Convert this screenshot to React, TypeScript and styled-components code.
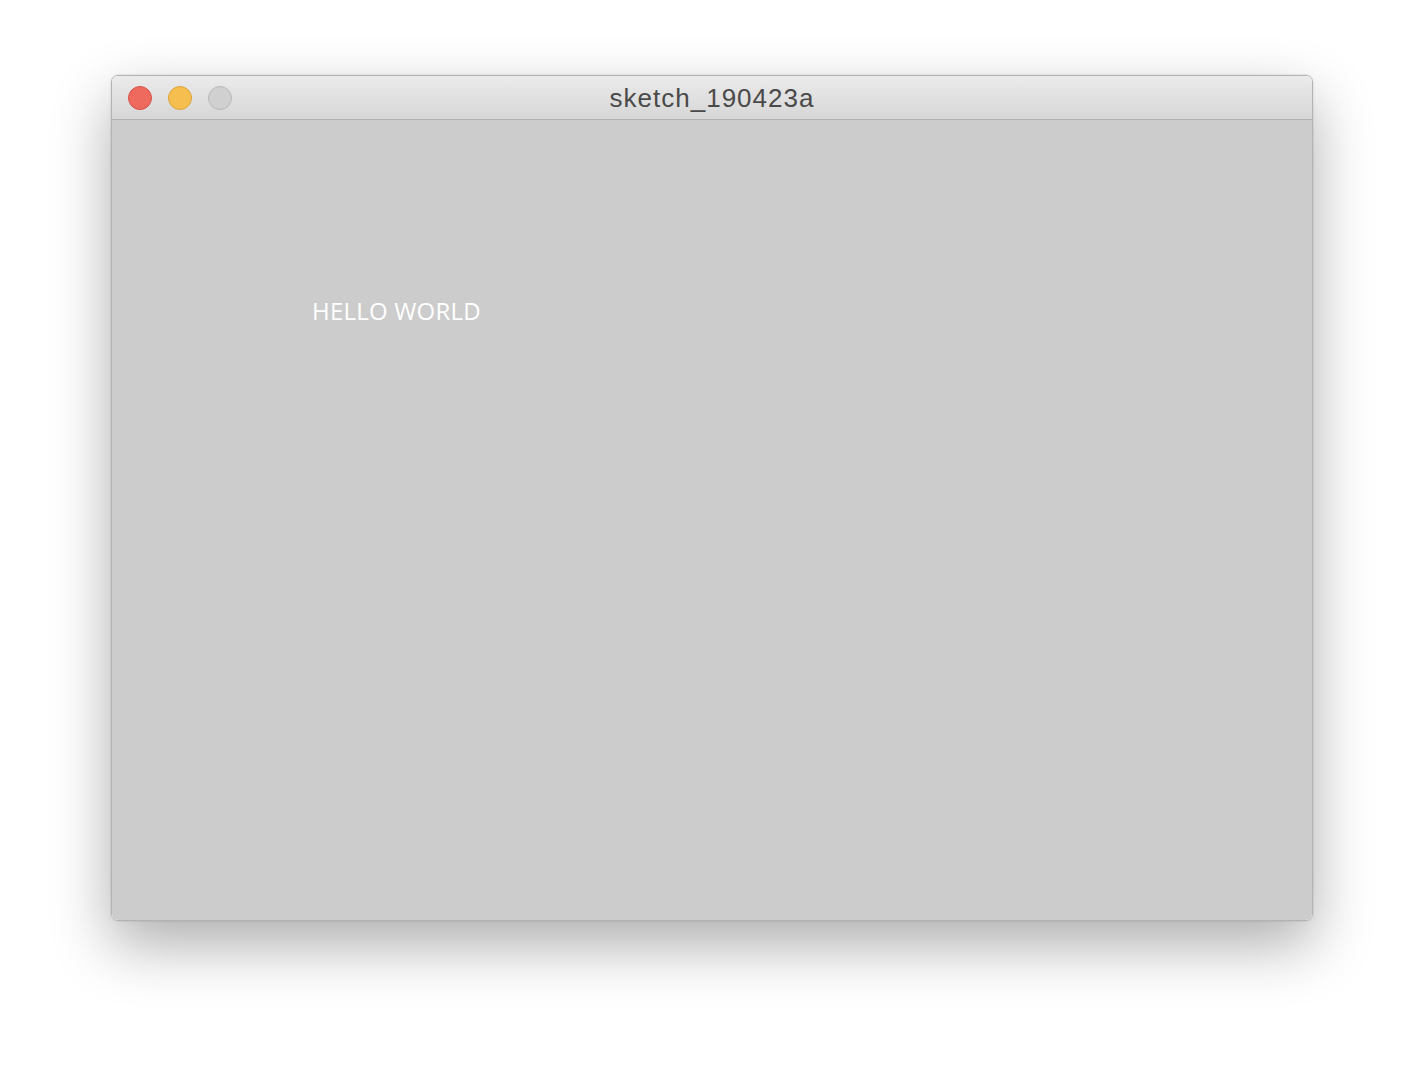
import React from 'react';
import styled, { createGlobalStyle } from 'styled-components';

const GlobalStyle = createGlobalStyle`
  html, body {
    margin: 0;
    padding: 0;
    background: #ffffff;
  }
  body {
    font-family: "Liberation Sans", Arial, sans-serif;
  }
`;

const Page = styled.div`
  width: 1424px;
  height: 1068px;
  padding: 75px 0 0 111px;
  box-sizing: border-box;
  overflow: hidden;
`;

const Window = styled.div`
  width: 1202px;
  border: 1px solid #b3b3b3;
  border-radius: 7px;
  overflow: hidden;
  box-sizing: border-box;
  box-shadow: 0 24px 60px rgba(0, 0, 0, 0.32), 0 0 2px rgba(0, 0, 0, 0.2);
`;

const TitleBar = styled.div`
  height: 43px;
  display: flex;
  align-items: center;
  position: relative;
  background: linear-gradient(#ebebeb, #d6d6d6);
  border-bottom: 1px solid #b1b1b1;
  padding-left: 16px;
  gap: 16px;
`;

const Light = styled.span<{ fill: string; ring: string }>`
  width: 24px;
  height: 24px;
  border-radius: 50%;
  box-sizing: border-box;
  background: ${p => p.fill};
  border: 1px solid ${p => p.ring};
`;

const Title = styled.div`
  position: absolute;
  left: 0;
  right: 0;
  top: 2px;
  bottom: 0;
  display: flex;
  align-items: center;
  justify-content: center;
  font-family: "Liberation Sans", Arial, sans-serif;
  font-size: 26px;
  letter-spacing: 1px;
  color: #4a4a4a;
  pointer-events: none;
`;

const Canvas = styled.div`
  height: 800px;
  background: #cccccc;
  padding: 176px 0 0 200px;
  box-sizing: border-box;
`;

const Hello = styled.div`
  font-family: "Open Sans", "DejaVu Sans", sans-serif;
  font-size: 24px;
  line-height: 30px;
  color: #ffffff;
  letter-spacing: 0.2px;
`;

export default function App() {
  return (
    <Page>
      <GlobalStyle />
      <Window>
        <TitleBar>
          <Light fill="#ee6a5f" ring="#d4524a" />
          <Light fill="#f6be4f" ring="#dba53c" />
          <Light fill="#d0d0d0" ring="#b8b8b8" />
          <Title>sketch_190423a</Title>
        </TitleBar>
        <Canvas>
          <Hello>HELLO WORLD</Hello>
        </Canvas>
      </Window>
    </Page>
  );
}
